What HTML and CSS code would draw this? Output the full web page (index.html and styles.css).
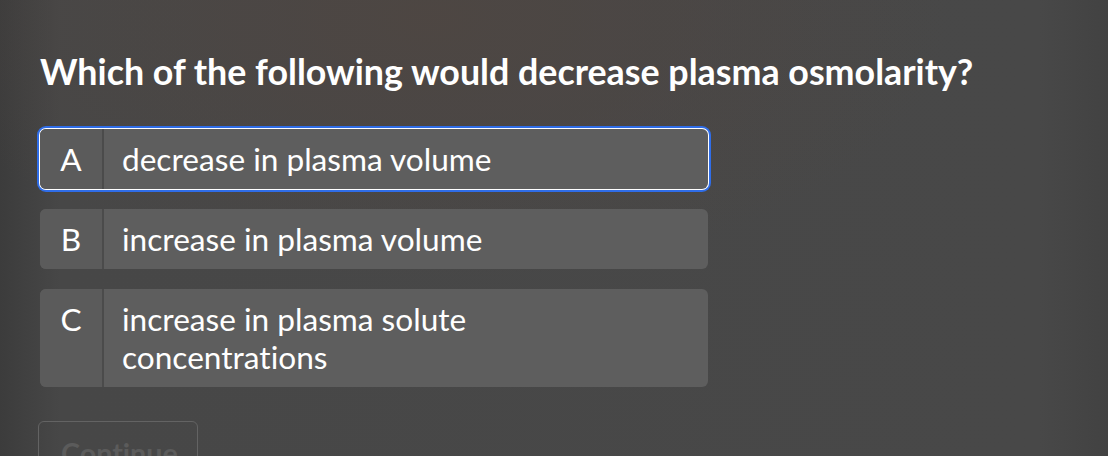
FILE: index.html
```html
<!DOCTYPE html>
<html lang="en">
<head>
  <meta charset="UTF-8">
  <title>Question</title>
  <meta name="viewport" content="width=device-width, initial-scale=1.0">
  <link rel="stylesheet" href="styles.css">
</head>
<body>

<div class="quiz">
  <h1 class="quiz-question">Which of the following would decrease plasma osmolarity?</h1>

  <div class="quiz-options">
    <button class="quiz-option focused">
      <span class="quiz-letter">A</span>
      <span class="quiz-text">decrease in plasma volume</span>
    </button>
    <button class="quiz-option">
      <span class="quiz-letter">B</span>
      <span class="quiz-text">increase in plasma volume</span>
    </button>
    <button class="quiz-option">
      <span class="quiz-letter">C</span>
      <span class="quiz-text">increase in plasma solute<br>concentrations</span>
    </button>
  </div>

  <button class="quiz-continue" disabled>Continue</button>
</div>

</body>
</html>
```

FILE: styles.css
```css
html, body {
  height: 100%;
}

body {
  margin: 0;
  padding: 0;
  font-family: Lato, "Open Sans", sans-serif;
  font-variant-ligatures: none;
  color: #fff;
  background: #474747;
  background-image:
    radial-gradient(ellipse 520px 260px at 430px 20px, rgba(78, 70, 66, 0.9), rgba(72, 72, 72, 0) 100%),
    linear-gradient(to right, #3c3c3c 0, #474747 60px, #484848 1040px, #424242 100%);
  overflow: hidden;
}

.quiz {
  padding: 52px 40px 0;
}

.quiz-question {
  margin: 0 0 37px;
  font-size: 35.8px;
  font-weight: 700;
  line-height: 40px;
}

.quiz-options {
  display: flex;
  flex-direction: column;
  gap: 20px;
  width: 668px;
}

.quiz-option {
  all: unset;
  display: flex;
  background: #5e5e5e;
  border-radius: 6px;
  cursor: pointer;
  font-family: Lato, "Open Sans", sans-serif;
  font-variant-ligatures: none;
  font-size: 31.6px;
  line-height: 38px;
  color: #fff;
}

.quiz-option.focused {
  box-shadow: 0 0 0 1px #fff, 0 0 0 3px #2f6de8;
}

.quiz-letter {
  flex: 0 0 62px;
  text-align: center;
  padding: 11px 0;
  background: #5b5b5b;
  border-right: 2px solid #4b4b4b;
  border-radius: 6px 0 0 6px;
}

.quiz-text {
  padding: 11px 18px;
}

.quiz-continue {
  margin: 34px 0 0 -2px;
  width: 160px;
  padding: 16px 0 0 22px;
  text-align: left;
  background: transparent;
  border: 1px solid #636363;
  border-radius: 6px;
  font-family: Lato, "Open Sans", sans-serif;
  font-variant-ligatures: none;
  font-size: 28.7px;
  font-weight: 700;
  line-height: 30px;
  color: #5b5b5b;
}
```
